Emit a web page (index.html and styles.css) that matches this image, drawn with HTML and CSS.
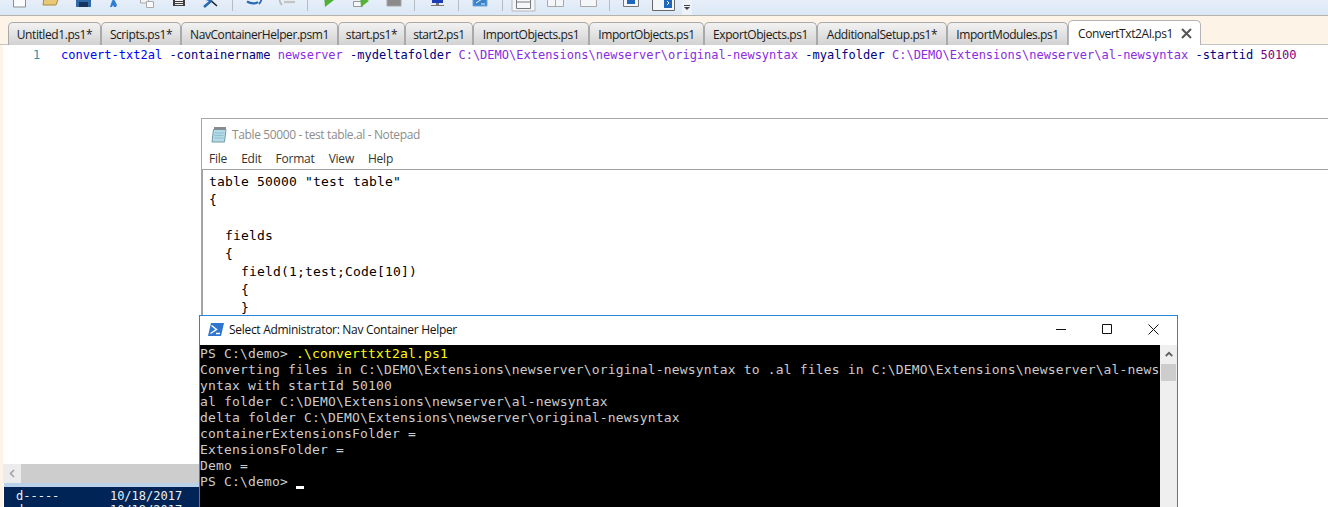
FILE: index.html
```html
<!DOCTYPE html>
<html lang="en">
<head>
<meta charset="utf-8">
<title>PowerShell ISE</title>
<link rel="stylesheet" href="styles.css">
</head>
<body>
<div class="desktop">
  <header class="toolbar">
    <svg class="toolbar-icons" width="700" height="15" viewBox="0 0 700 15">
      <path d="M13.500 -4H25.500V7H13.500Z" fill="#fbfbfb" stroke="#8f8f8f"/>
      <path d="M44 -3H59L56 5H43Z" fill="#e8c877" stroke="#a98a3f"/>
      <path d="M76 -4H91V7H76Z" fill="#2f69a8"/><path d="M79 2H88V7H79Z" fill="#16345c"/><path d="M79 -4H88V0H79Z" fill="#e8eef5"/>
      <path d="M110 7l2 -6 1.500 -2 1.500 2 2 4 -1 2h-2l-1 -2-1 2z" fill="#2a7fd0"/>
      <path d="M140.500 -3H148.500V3H140.500Z" fill="#f2f2f2" stroke="#aaa"/><path d="M146.500 1.500H153.500V7.500H146.500Z" fill="#fafafa" stroke="#aaa"/>
      <path d="M173 -3H185V6H173Z" fill="#3d3d3d"/><path d="M175 .5H183M175 2.500H183M175 4.500H183" stroke="#eee"/>
      <path d="M204 7L211 1" stroke="#2668b0" stroke-width="2.500" fill="none"/><path d="M209 -1L217 6" stroke="#222" stroke-width="1.500"/><path d="M206 -1L212 1" stroke="#2668b0" stroke-width="2"/>
      <path d="M247 1.500C251 4 256 4 258 2" stroke="#2c68b5" stroke-width="2.200" fill="none"/><path d="M261 -3C262 0 261 2 259 4" stroke="#2c68b5" stroke-width="1.800" fill="none"/>
      <path d="M280 -3C279 0 280 3 282 5" stroke="#bbb" stroke-width="1.800" fill="none"/><path d="M284 2H295" stroke="#c4c4c4" stroke-width="2.200"/>
      <path d="M324 -4L334 0L325 7Z" fill="#4fb03a"/>
      <path d="M353.500 1.500H362.500V6.500H353.500Z" fill="#f5f5f5" stroke="#999"/><path d="M360 -4L369 1L361 7Z" fill="#55b33c"/>
      <path d="M387 -4H401V6H387Z" fill="#8a8a8a" stroke="#a5a5a5"/>
      <path d="M432 -4H443V3H432Z" fill="#1c3cb8"/><path d="M436 3H439V5H436ZM431 5H444V6H431Z" fill="#777"/>
      <path d="M473 -4H487V6H473Z" fill="#3a84cc" stroke="#6aa8dd"/><path d="M476 3L482 -1M481 4H485" stroke="#e8f2fb"/>
      <path d="M512 -4H535V11H512Z" fill="#f1f4f8" stroke="#b8b8b8"/><path d="M516.500 -4H530.500V8.500H516.500Z" fill="#f5f7fa" stroke="#7b7b7b"/><path d="M517 2H530" stroke="#7b7b7b"/>
      <path d="M547.500 -4H563.500V6.500H547.500Z" fill="#f3f5f8" stroke="#a8a8a8"/><path d="M555.500 -4V6" stroke="#a8a8a8"/>
      <path d="M580.500 -4H596.500V6.500H580.500Z" fill="#f5f6f8" stroke="#a8a8a8"/>
      <path d="M623.500 -4H638.500V6.500H623.500Z" fill="#f3f6fa" stroke="#777"/><path d="M627 -3H635V4H627Z" fill="#1f66bd"/>
      <path d="M652.500 -4H674.500V10.500H652.500Z" fill="#f3f6fa" stroke="#666"/><path d="M664 -4H672V8H664Z" fill="#1f66bd"/><path d="M667 1L669 3L667 5" stroke="#fff" fill="none"/>
      <path d="M682 0H692V15H682Z" fill="#edf2f8"/><path d="M684 5.500H690" stroke="#444"/><path d="M684 7H690L687 10Z" fill="#444"/>
      <path d="M232.500 0V11M307.500 0V11M414.500 0V11M458.500 0V11M502.500 0V11M609.500 0V11" stroke="#b4bcc6"/>
    </svg>
  </header>

  <nav class="tabs">
    <div class="tab">Untitled1.ps1*</div>
    <div class="tab">Scripts.ps1*</div>
    <div class="tab">NavContainerHelper.psm1</div>
    <div class="tab">start.ps1*</div>
    <div class="tab">start2.ps1</div>
    <div class="tab">ImportObjects.ps1</div>
    <div class="tab">ImportObjects.ps1</div>
    <div class="tab">ExportObjects.ps1</div>
    <div class="tab">AdditionalSetup.ps1*</div>
    <div class="tab">ImportModules.ps1</div>
    <div class="tab tab-active">ConvertTxt2AI.ps1
      <svg class="tab-close" width="11" height="11" viewBox="0 0 11 11"><path d="M1 1L10 10M10 1L1 10" stroke="#555" stroke-width="2"/></svg>
    </div>
  </nav>

  <main class="workspace">
    <div class="code-line">
      <span class="line-no">1</span>
      <code class="code"><span class="c-cmd">convert-txt2al</span> <span class="c-par">-containername</span> <span class="c-arg">newserver</span> <span class="c-par">-mydeltafolder</span> <span class="c-arg">C:\DEMO\Extensions\newserver\original-newsyntax</span> <span class="c-par">-myalfolder</span> <span class="c-arg">C:\DEMO\Extensions\newserver\al-newsyntax</span> <span class="c-par">-startid</span> <span class="c-num">50100</span></code>
    </div>
  </main>

  <div class="hscroll">
    <div class="hscroll-btn">
      <svg width="6" height="9" viewBox="0 0 6 9"><path d="M5 1L1.500 4.500L5 8" stroke="#a0a0a0" stroke-width="1.500" fill="none"/></svg>
    </div>
  </div>

  <div class="blue-pane">
    <pre class="blue-text">d-----       10/18/2017
d-----       10/18/2017</pre>
  </div>

  <section class="notepad">
    <div class="np-title">
      <svg width="16" height="17" viewBox="0 0 16 17">
        <path d="M2.500 3.500H15L13.500 16H1Z" fill="#b5dbe8" stroke="#6f9aa8"/>
        <path d="M4 7H13M3.500 9.500H12.500M3.500 12H12.500" stroke="#8fc0d0"/>
        <path d="M3 1H15V3.500H3Z" fill="#8a8a8a"/>
      </svg>
      <span>Table 50000 - test table.al - Notepad</span>
    </div>
    <div class="np-menu"><span>File</span><span>Edit</span><span>Format</span><span>View</span><span>Help</span></div>
    <pre class="np-text">table 50000 "test table"
{

  fields
  {
    field(1;test;Code[10])
    {
    }</pre>
  </section>

  <section class="console">
    <div class="con-title">
      <svg width="16" height="13" viewBox="0 0 16 13">
        <path d="M3 0H16L13 13H0Z" fill="#2f74d0"/>
        <path d="M3.500 2.500L8.500 6.500L2.500 10.500" stroke="#fff" stroke-width="1.500" fill="none"/>
        <path d="M8 10.500H12" stroke="#fff" stroke-width="1.500"/>
      </svg>
      <span class="con-name">Select Administrator: Nav Container Helper</span>
      <div class="win-btns">
        <svg width="11" height="11" viewBox="0 0 11 11"><path d="M0 5.500H10" stroke="#111"/></svg>
        <svg width="11" height="11" viewBox="0 0 11 11"><path d="M.5.500H9.500V9.500H.5Z" fill="none" stroke="#111"/></svg>
        <svg width="11" height="11" viewBox="0 0 11 11"><path d="M.5.500L10.500 10.500M10.500.500L.5 10.500" stroke="#111"/></svg>
      </div>
    </div>
    <div class="con-body">
      <pre class="con-text">PS C:\demo&gt; <span class="con-cmd">.\converttxt2al.ps1</span>
Converting files in C:\DEMO\Extensions\newserver\original-newsyntax to .al files in C:\DEMO\Extensions\newserver\al-news
yntax with startId 50100
al folder C:\DEMO\Extensions\newserver\al-newsyntax
delta folder C:\DEMO\Extensions\newserver\original-newsyntax
containerExtensionsFolder =
ExtensionsFolder =
Demo =
PS C:\demo&gt; <span class="con-cursor"></span></pre>
      <div class="con-scroll">
        <svg width="8" height="6" viewBox="0 0 8 6"><path d="M.8 5L4 1.800L7.200 5" stroke="#606060" stroke-width="1.800" fill="none"/></svg>
        <div class="con-thumb"></div>
      </div>
    </div>
  </section>
</div>
</body>
</html>
```

FILE: styles.css
```css
* { box-sizing: border-box; }
html, body { margin: 0; padding: 0; background: #fff; }
.desktop {
  position: relative;
  width: 1328px;
  height: 507px;
  overflow: hidden;
  display: flex;
  flex-direction: column;
  background: #fdf3e7;
}
.toolbar {
  height: 16px;
  flex: none;
  background: linear-gradient(#e6eff9, #dbe7f5);
  border-bottom: 1px solid #b5b1ad;
}
.toolbar-icons { display: block; }
.tabs {
  height: 29px;
  flex: none;
  padding: 6px 0 0 8px;
  display: grid;
  grid-template-columns: 93px 80px 157px 67px 68px 116px 115px 113px 130px 121px 133px;
  font: 12px/1 "Open Sans", sans-serif;
  letter-spacing: -0.42px;
  color: #1a1a1a;
  border-bottom: 1px solid #c4c4c4;
}
.tab {
  display: flex;
  align-items: center;
  justify-content: center;
  padding-top: 1px;
  white-space: nowrap;
  background: linear-gradient(#f2f2f2, #d2d2d2);
  border: 1px solid #a9a9a9;
  border-bottom: 0;
  border-radius: 5px 5px 0 0;
  height: 23px;
}
.tab-active {
  background: #fff;
  justify-content: flex-start;
  padding-left: 9px;
  height: 25px;
  margin-top: -2px;
  position: relative;
  z-index: 1;
  border-color: #b4b4b4;
}
.tab-close { margin-left: 8px; }
.workspace {
  flex: none;
  height: 462px;
  margin-left: 3px;
  background: #fff;
}
.code-line {
  display: flex;
  height: 20px;
  padding-top: 2px;
}
.line-no {
  width: 58px;
  padding-left: 30px;
  font: 12px/16px "DejaVu Sans Mono", monospace;
  color: #2b91af;
}
.code {
  font: 12px/16px "DejaVu Sans Mono", monospace;
  white-space: pre;
}
.c-cmd { color: #0000ff; }
.c-par { color: #000080; }
.c-arg { color: #8a2be2; }
.c-num { color: #800080; }
.hscroll {
  position: absolute;
  left: 3px;
  top: 464px;
  width: 197px;
  height: 19px;
  background: #cdcdcd;
}
.hscroll-btn {
  width: 18px;
  height: 19px;
  background: #ececec;
  display: flex;
  align-items: center;
  justify-content: center;
}
.blue-pane {
  position: absolute;
  left: 4px;
  top: 483px;
  width: 196px;
  height: 24px;
  border-top: 4px solid #b9d2ea;
  background: #012456;
}
.blue-text {
  margin: 0;
  padding: 2px 0 0 12px;
  font: 12px/14px "DejaVu Sans Mono", monospace;
  color: #f0f0f0;
}
.notepad {
  position: absolute;
  left: 201px;
  top: 118px;
  width: 1127px;
  height: 260px;
  background: #fff;
  border-top: 1px solid #a6a6a6;
  border-left: 1px solid #a6a6a6;
}
.np-title {
  height: 31px;
  display: flex;
  align-items: center;
  gap: 5px;
  padding-left: 9px;
  font: 12px "Open Sans", sans-serif;
  color: #8d8d8d;
  letter-spacing: -0.37px;
}
.np-menu {
  height: 20px;
  display: flex;
  gap: 14px;
  padding-left: 7px;
  font: 12px "Open Sans", sans-serif;
  color: #333;
  letter-spacing: -0.22px;
  border-bottom: 1px solid #a0a0a0;
}
.np-text {
  margin: 0;
  padding: 3px 0 0 6px;
  border-left: 1px solid #a0a0a0;
  font: 13px/18px "DejaVu Sans Mono", monospace;
  letter-spacing: 0.17px;
  color: #000;
}
.console {
  position: absolute;
  left: 199px;
  top: 315px;
  width: 979px;
  height: 192px;
  display: flex;
  flex-direction: column;
  background: #fff;
  border: 1px solid #2a84d8;
  border-bottom: 0;
}
.con-title {
  height: 29px;
  flex: none;
  display: flex;
  align-items: center;
  padding: 0 0 2px 8px;
  font: 12px "Open Sans", sans-serif;
  color: #111;
  letter-spacing: -0.3px;
}
.con-name { margin-left: 5px; }
.win-btns {
  margin-left: auto;
  margin-right: 18px;
  display: flex;
  gap: 35px;
}
.con-body {
  flex: 1;
  display: flex;
  background: #000;
  min-height: 0;
}
.con-text {
  flex: 1;
  margin: 0;
  padding-top: 1px;
  font: 13px/16px "DejaVu Sans Mono", monospace;
  letter-spacing: 0.17px;
  color: #cccccc;
  white-space: pre;
  overflow: hidden;
}
.con-cmd { color: #ffff00; }
.con-cursor {
  display: inline-block;
  width: 8px;
  height: 3px;
  background: #fff;
  vertical-align: -3px;
}
.con-scroll {
  width: 17px;
  flex: none;
  background: #efefef;
  display: flex;
  flex-direction: column;
  align-items: center;
  padding-top: 6px;
}
.con-scroll svg { display: block; }
.con-thumb {
  width: 15px;
  height: 17px;
  margin-top: 7px;
  background: #cdcdcd;
}
```
